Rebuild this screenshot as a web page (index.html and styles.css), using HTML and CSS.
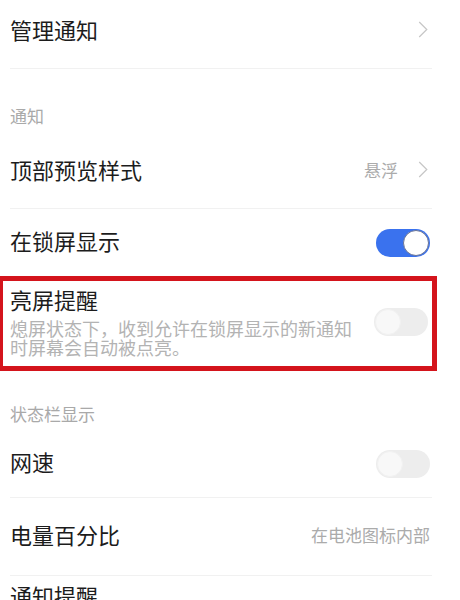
FILE: index.html
```html
<!DOCTYPE html>
<html lang="zh-CN">
<head>
<meta charset="utf-8">
<link rel="stylesheet" href="styles.css">
</head>
<body>
<div class="page">
  <div class="row row-first">
    <span class="title">管理通知</span>
    <span class="right"><svg class="chev" viewBox="0 0 10 18"><path d="M1 1 L9 9 L1 17"/></svg></span>
  </div>
  <div class="divider"></div>

  <div class="header h-notify">通知</div>
  <div class="row row-preview">
    <span class="title">顶部预览样式</span>
    <span class="right"><span class="value">悬浮</span><svg class="chev" viewBox="0 0 10 18"><path d="M1 1 L9 9 L1 17"/></svg></span>
  </div>
  <div class="divider"></div>

  <div class="row row-lock">
    <span class="title">在锁屏显示</span>
    <span class="switch on"><span class="knob"></span></span>
  </div>

  <div class="row row-wake">
    <div class="wake-text">
      <div class="wake-title">亮屏提醒</div>
      <div class="desc">熄屏状态下，收到允许在锁屏显示的新通知<br>时屏幕会自动被点亮。</div>
    </div>
    <span class="switch off"><span class="knob"></span></span>
  </div>

  <div class="header h-status">状态栏显示</div>
  <div class="row row-speed">
    <span class="title">网速</span>
    <span class="switch off"><span class="knob"></span></span>
  </div>
  <div class="divider"></div>

  <div class="row row-battery">
    <span class="title">电量百分比</span>
    <span class="value">在电池图标内部</span>
  </div>
  <div class="divider"></div>

  <div class="row row-last">
    <span class="title">通知提醒</span>
  </div>
</div>
</body>
</html>
```

FILE: styles.css
```css
html, body {
  margin: 0;
  padding: 0;
  background: #ffffff;
}
body {
  font-family: "Noto Sans CJK SC", "Noto Sans", sans-serif;
  color: #1b1b1b;
  overflow: hidden;
}
.page {
  padding: 0 30px 0 10px;
  width: 420px;
}
.row {
  display: flex;
  align-items: center;
  justify-content: space-between;
}
.title,
.wake-title {
  font-size: 22px;
  line-height: 26px;
  color: #1c1c1c;
}
.row .title {
  margin-bottom: 5px;
}
.right {
  display: flex;
  align-items: center;
  margin-bottom: 4px;
}
.value {
  font-size: 17px;
  line-height: 22px;
  color: #ababab;
}
.row-battery .value {
  margin-bottom: 4px;
}
.right .value {
  margin-right: 20px;
}
.chev {
  width: 10px;
  height: 17px;
  margin-right: 2px;
  fill: none;
  stroke: #c6c6c6;
  stroke-width: 1.3;
}
.divider {
  height: 1px;
  background: #f1f1f1;
  margin-right: -2px;
}
.header {
  display: flex;
  align-items: flex-end;
  font-size: 17px;
  line-height: 24px;
  color: #a9a9a9;
}
.row-first {
  height: 62px;
  padding-bottom: 6px;
}
.h-notify {
  height: 59px;
  padding-bottom: 7px;
}
.row-preview {
  height: 73px;
}
.row-lock {
  height: 67px;
}
.row-wake {
  margin: 0 -7px 0 -12px;
  border: 5px solid #d4141c;
  padding: 5px 4px 9px 7px;
  align-items: center;
}
.desc {
  margin-top: 7px;
  font-size: 18px;
  line-height: 19px;
  color: #b3b3b3;
}
.h-status {
  height: 55px;
  padding-bottom: 4px;
}
.row-speed {
  height: 67px;
}
.row-battery {
  height: 77px;
}
.row-last {
  padding-top: 6px;
  align-items: flex-start;
  height: 60px;
}
.switch {
  position: relative;
  display: block;
  width: 54px;
  height: 28px;
  border-radius: 14px;
  flex: none;
}
.switch.on {
  background: #3a72ee;
}
.switch.off {
  background: #ededed;
}
.knob {
  position: absolute;
  top: 1px;
  width: 26px;
  height: 26px;
  border-radius: 50%;
  background: #ffffff;
  box-sizing: border-box;
}
.switch.on .knob {
  right: 1px;
  border: 1.5px solid #6a7596;
}
.switch.off .knob {
  left: 1px;
  background: #f8f8f8;
  border: 1px solid #f1f1f1;
}
```
